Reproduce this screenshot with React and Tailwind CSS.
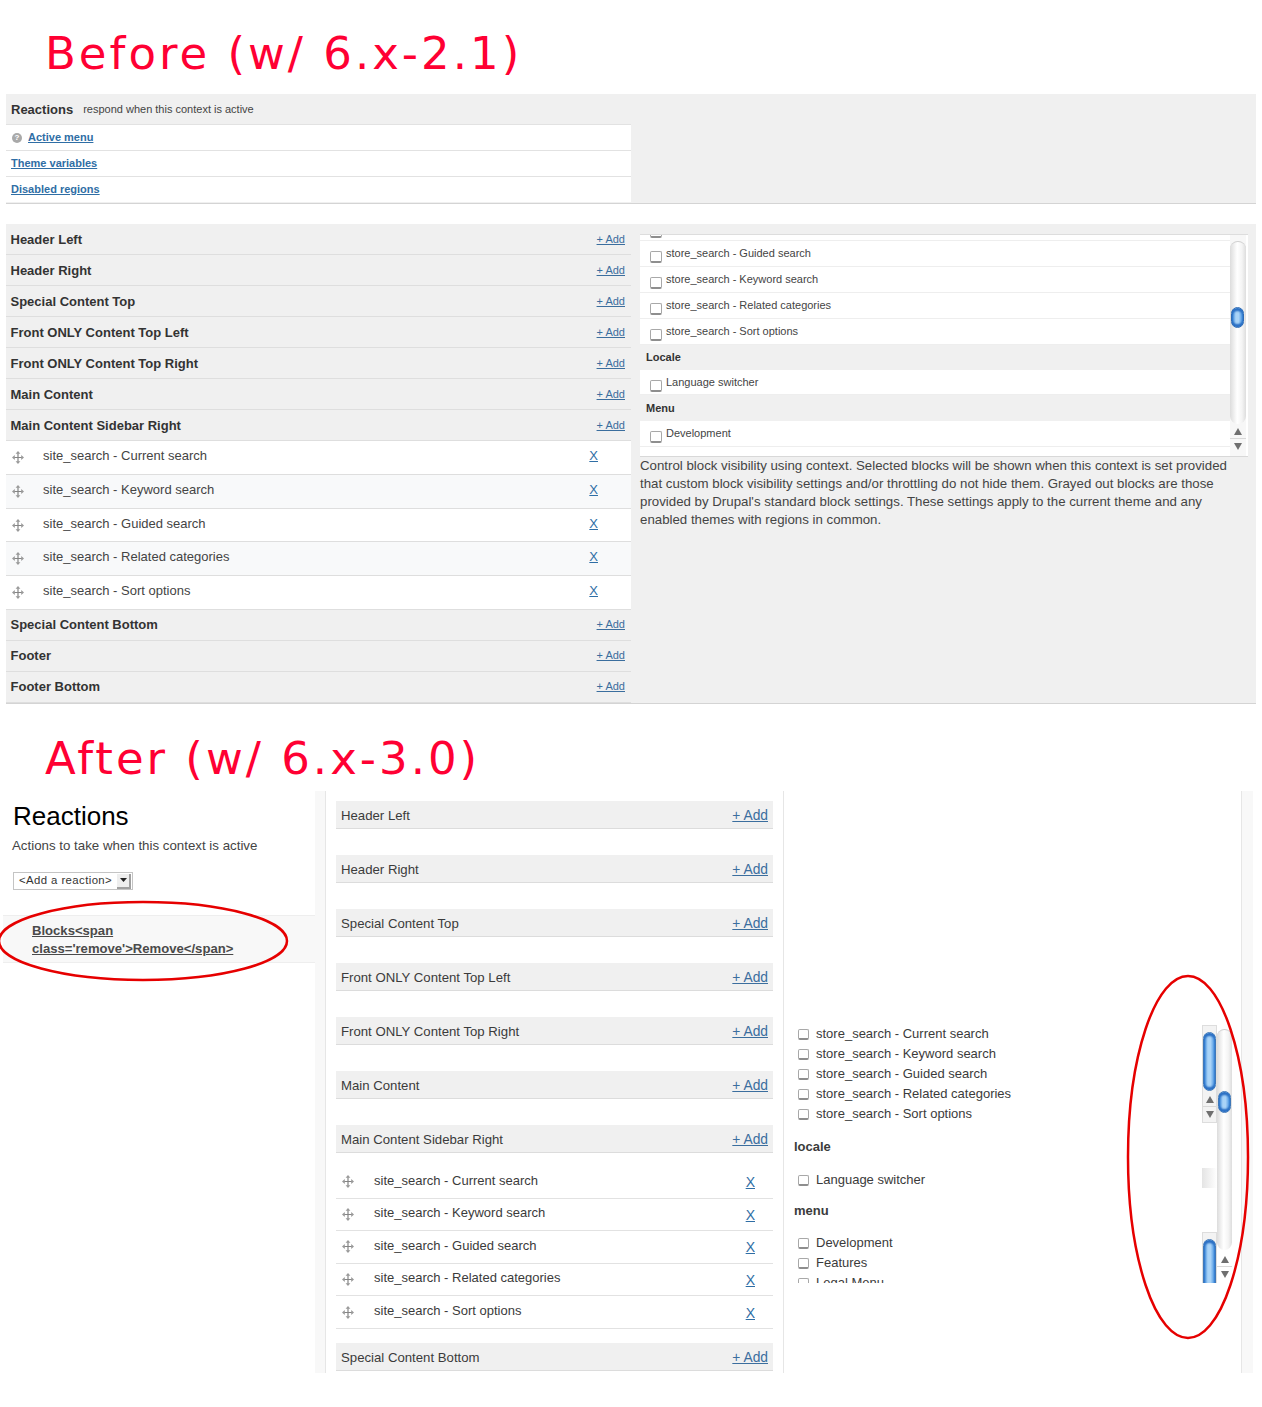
import React from 'react';

const sans = 'font-["Liberation_Sans",Arial,sans-serif]';

const DragIcon = () => (
  <svg width="12" height="13" viewBox="0 0 12 13" className="shrink-0" fill="none">
    <path d="M6 1.5v10M1 6.5h10" stroke="#858585" strokeWidth="1.2" />
    <path d="M6 0l2.4 2.8H3.6zM6 13l2.4-2.8H3.6zM0 6.5l2.8-2.4v4.8zM12 6.5l-2.8-2.4v4.8z" fill="#9a9a9a" />
  </svg>
);

const Check = ({ className = '' }) => (
  <div className={`w-[12px] h-[12px] shrink-0 rounded-[2px] border border-[#a8a8a8] border-b-2 border-b-[#8e8e8e] bg-white ${className}`}></div>
);

const Arrows = () => (
  <div className="flex flex-col items-center">
    <div className="h-[15px] w-full flex items-center justify-center border-b border-[#d8d8d8]">
      <svg width="8" height="7" viewBox="0 0 8 7"><path d="M4 0l4 7H0z" fill="#6f6f6f" /></svg>
    </div>
    <div className="h-[15px] w-full flex items-center justify-center">
      <svg width="8" height="7" viewBox="0 0 8 7"><path d="M4 7l4-7H0z" fill="#6f6f6f" /></svg>
    </div>
  </div>
);

const Thumb = ({ className = '' }) => (
  <div className={`w-[13px] rounded-full border border-[#3f78b8] bg-[linear-gradient(90deg,#2f7fd6,#a9d3f7_35%,#a9d3f7_60%,#3f8ee0)] shadow-[inset_0_3px_2px_#2a6fc4,inset_0_-3px_2px_#2a6fc4] ${className}`}></div>
);

const Track = ({ className = '' }) => (
  <div className={`rounded-full border-t border-[#cfcfcf] bg-[linear-gradient(90deg,#dcdcdc,#ffffff_45%,#f4f4f4_75%,#dddddd)] ${className}`}></div>
);

const AddLink = ({ className = '' }) => (
  <a className={`text-[#3b6e9e] underline ${className}`}>+ Add</a>
);

const beforeTop = ['Header Left', 'Header Right', 'Special Content Top', 'Front ONLY Content Top Left', 'Front ONLY Content Top Right', 'Main Content', 'Main Content Sidebar Right'];
const beforeBottom = ['Special Content Bottom', 'Footer', 'Footer Bottom'];
const items = ['Current search', 'Keyword search', 'Guided search', 'Related categories', 'Sort options'];
const itemHeights = ['h-[34px]', 'h-[34px]', 'h-[33px]', 'h-[34px]', 'h-[34px]'];
const afterTop = ['Header Left', 'Header Right', 'Special Content Top', 'Front ONLY Content Top Left', 'Front ONLY Content Top Right', 'Main Content'];

const Title = ({ children, className = '' }) => (
  <h1 className={`pl-[45px] font-["DejaVu_Sans",sans-serif] text-[45px] leading-none tracking-[3px] text-[#ff0033] ${className}`}>{children}</h1>
);

const BeforeRegion = ({ name, top }) => (
  <div className="h-[31px] flex items-center justify-between pl-[4.5px] pr-[6px] border-b border-[#dedede] bg-[#f0f0f0]">
    <span className={`text-[13px] font-bold text-[#333] ${top ? 'pt-[2px]' : ''}`}>{name}</span>
    <AddLink className={`text-[11px] ${top ? '' : '-mt-[2px]'}`} />
  </div>
);

const BeforeOption = ({ label, height = 'h-[26px]' }) => (
  <div className={`${height} flex pl-[10px] border-b border-[#eeeeee] bg-white`}>
    <Check className="mt-[10px]" />
    <span className="ml-[4px] mt-[5px] text-[11px] leading-[14px] text-[#444]">{label}</span>
  </div>
);

const BeforeGroup = ({ label, height }) => (
  <div className={`${height} flex items-center pl-[6px] bg-[#f0f0f0] text-[11px] font-bold text-[#333]`}>{label}</div>
);

const AfterRegion = ({ name, className = '' }) => (
  <div className={`h-[28px] flex items-center justify-between pl-[5px] pr-[5px] border-b border-[#dcdcdc] bg-[#f0f0f0] text-[#3b3b3b] ${className}`}>
    <span className="pt-[3px] text-[13.2px]">{name}</span>
    <AddLink className="pt-[3px] text-[13.8px]" />
  </div>
);

const AfterOption = ({ label }) => (
  <div className="h-[20px] flex items-center gap-[7px]">
    <Check className="!h-[11px] !w-[11px]" />
    <span className="text-[13px] text-[#3b3b3b]">{label}</span>
  </div>
);

export default function App() {
  return (
    <div className={`relative h-[1407px] w-[1262px] overflow-hidden bg-white ${sans}`}>
      <Title className="pt-[31px] h-[94px]">Before (w/ 6.x-2.1)</Title>

      {/* Before: reactions */}
      <div className="mx-[6px] h-[110px] bg-[#f0f0f0] border-b border-[#d4d4d4]">
        <div className="h-[30px] flex items-center gap-[10px] pl-[5px] pt-[1px]">
          <span className="text-[13px] font-bold text-[#333]">Reactions</span>
          <span className="text-[11px] text-[#444]">respond when this context is active</span>
        </div>
        <div className="w-[625px]">
          <div className="h-[26px] flex items-center gap-[6px] pl-[6px] bg-white border-t border-[#e2e2e2]">
            <span className="flex h-[10px] w-[10px] items-center justify-center rounded-full bg-[#a9a9a9] text-[8px] font-bold text-white">?</span>
            <a className="text-[11px] font-bold text-[#2f6ea5] underline">Active menu</a>
          </div>
          <div className="h-[26px] flex items-center pl-[5px] bg-white border-t border-[#e2e2e2]">
            <a className="text-[11px] font-bold text-[#2f6ea5] underline">Theme variables</a>
          </div>
          <div className="h-[26px] flex items-center pl-[5px] bg-white border-t border-[#e2e2e2]">
            <a className="text-[11px] font-bold text-[#2f6ea5] underline">Disabled regions</a>
          </div>
        </div>
      </div>

      {/* Before: blocks */}
      <div className="mx-[6px] mt-[20px] h-[480px] flex bg-[#f0f0f0] border-b border-[#d4d4d4]">
        <div className="w-[625px] shrink-0">
          {beforeTop.map((name) => <BeforeRegion key={name} name={name} top />)}
          {items.map((item, i) => (
            <div key={item} className={`${itemHeights[i]} flex items-center pl-[6px] border-b border-[#dedede] ${i % 2 ? 'bg-[#f8f9fa]' : 'bg-white'}`}>
              <DragIcon />
              <span className="ml-[19px] -mt-[3px] flex-1 text-[13px] text-[#444]">site_search - {item}</span>
              <a className="mr-[33px] -mt-[3px] text-[13px] text-[#2f6ea5] underline">X</a>
            </div>
          ))}
          {beforeBottom.map((name) => <BeforeRegion key={name} name={name} />)}
        </div>

        <div className="ml-[9px] w-[608px] pt-[10px]">
          <div className="h-[223px] flex border-t border-[#dddddd] border-b border-b-[#d8d8d8] bg-white">
            <div className="w-[590px] shrink-0 overflow-hidden">
              <div className="h-[6px] overflow-hidden pl-[10px] border-b border-[#eeeeee]">
                <Check className="-mt-[9px]" />
              </div>
              <BeforeOption label="store_search - Guided search" />
              <BeforeOption label="store_search - Keyword search" />
              <BeforeOption label="store_search - Related categories" />
              <BeforeOption label="store_search - Sort options" />
              <BeforeGroup label="Locale" height="h-[25px]" />
              <BeforeOption label="Language switcher" height="h-[25px]" />
              <BeforeGroup label="Menu" height="h-[26px]" />
              <BeforeOption label="Development" height="h-[26px]" />
            </div>
            <div className="w-[16px] flex flex-col bg-[#f7f7f7]">
              <Track className="mt-[6px] h-[183px]" />
              <Thumb className="absolute ml-[1px] mt-[72px] h-[21px] !border-[#2f6cb5]" />
              <Arrows />
            </div>
          </div>
          <p className="w-[600px] text-[13.27px] leading-[18px] text-[#444]">
            Control block visibility using context. Selected blocks will be shown when this context is set provided that custom block visibility settings and/or throttling do not hide them. Grayed out blocks are those provided by Drupal's standard block settings. These settings apply to the current theme and any enabled themes with regions in common.
          </p>
        </div>
      </div>

      <Title className="pt-[32px] h-[87px]">After (w/ 6.x-3.0)</Title>

      {/* After */}
      <div className="h-[582px] flex">
        <div className="w-[315px] shrink-0">
          <h2 className="pl-[13px] pt-[9px] text-[26px] leading-[32px] text-black">Reactions</h2>
          <p className="pl-[12px] pt-[4px] text-[13.3px] leading-[20px] text-[#444]">Actions to take when this context is active</p>
          <div className="ml-[13px] mt-[16px] h-[18px] w-[120px] flex items-center justify-between pl-[5px] pr-[1px] border border-[#c4c4c4] bg-white">
            <span className="text-[11.4px] tracking-[0.4px] text-[#333]">&lt;Add a reaction&gt;</span>
            <span className="flex h-[15px] w-[14px] items-center justify-center border-r-2 border-b-2 border-[#a0a0a0] bg-[#eeeeee]">
              <svg width="7" height="4" viewBox="0 0 7 4"><path d="M0 0h7L3.5 4z" fill="#222" /></svg>
            </span>
          </div>
          <div className="ml-[3px] mt-[25px] h-[48px] pl-[29px] pt-[6px] border-y border-[#eeeeee] bg-[#f8f8f8] text-[13.1px] font-bold leading-[18px] text-[#4a4a4a]">
            <a className="underline">Blocks&lt;span<br />class='remove'&gt;Remove&lt;/span&gt;</a>
          </div>
        </div>

        <div className="w-[11px] shrink-0 bg-[#f8f8f8] border-r border-[#e6e6e6]"></div>

        <div className="w-[457px] shrink-0 pl-[10px] pr-[10px] pt-[10px]">
          {afterTop.map((name) => <AfterRegion key={name} name={name} className="mb-[26px]" />)}
          <AfterRegion name="Main Content Sidebar Right" className="mb-[13px]" />
          {items.map((item) => (
            <div key={item} className="h-[32.6px] flex items-center pl-[6px] pr-[18px] border-b border-[#e2e2e2]">
              <DragIcon />
              <span className="ml-[20px] -mt-[3px] flex-1 text-[13px] text-[#3b3b3b]">site_search - {item}</span>
              <a className="mt-[2px] text-[14px] text-[#2f6ea5] underline">X</a>
            </div>
          ))}
          <AfterRegion name="Special Content Bottom" className="mt-[14px]" />
        </div>

        <div className="w-[459px] shrink-0 flex border-l border-[#e6e6e6] border-r border-r-[#e6e6e6]">
          <div className="w-[418px] shrink-0 pl-[14px] pt-[233px] h-[492px] overflow-hidden">
            {items.map((item) => <AfterOption key={item} label={`store_search - ${item}`} />)}
            <div className="-ml-[4px] mt-[13px] mb-[13px] text-[13px] font-bold leading-[20px] text-[#3b3b3b]">locale</div>
            <AfterOption label="Language switcher" />
            <div className="-ml-[4px] mt-[11px] mb-[12px] text-[13px] font-bold leading-[20px] text-[#3b3b3b]">menu</div>
            <AfterOption label="Development" />
            <AfterOption label="Features" />
            <AfterOption label="Legal Menu" />
          </div>

          <div className="w-[15px] shrink-0 pt-[234px] h-[492px] overflow-hidden flex flex-col">
            <div className="h-[98px] shrink-0 bg-[#f3f3f3] border border-[#dddddd] flex flex-col items-center pt-[6px]">
              <Thumb className="h-[60px]" />
              <div className="w-full pt-[1px]"><Arrows /></div>
            </div>
            <div className="mt-[45px] h-[20px] shrink-0 bg-[linear-gradient(90deg,#e4e4e4,#ffffff)]"></div>
            <div className="mt-[44px] h-[52px] shrink-0 bg-[#f3f3f3] border-x border-t border-[#dddddd] flex flex-col items-center pt-[6px]">
              <Thumb className="h-[58px] shrink-0" />
            </div>
          </div>

          <div className="w-[15px] shrink-0 pt-[232px] h-[492px] overflow-hidden flex flex-col">
            <Track className="mt-[6px] h-[221px] shrink-0 rounded-full" />
            <Thumb className="absolute ml-[1px] mt-[68px] h-[22px]" />
            <div className="mt-[2px]"><Arrows /></div>
          </div>
        </div>

        <div className="w-[11px] shrink-0 bg-[#f8f8f8]"></div>
      </div>

      {/* red annotations drawn on top of the screenshot */}
      <svg className="absolute left-0 top-0 pointer-events-none" width="1262" height="1407" fill="none">
        <ellipse cx="143" cy="941" rx="144" ry="39" stroke="#e60000" strokeWidth="2.5" />
        <ellipse cx="1188" cy="1157" rx="60" ry="181" stroke="#e60000" strokeWidth="2.5" />
      </svg>
    </div>
  );
}
